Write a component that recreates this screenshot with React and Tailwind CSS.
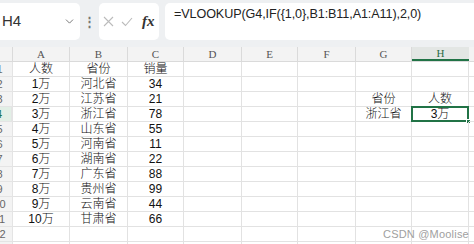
import React from 'react';
import { ChevronDown } from 'lucide-react';

// column widths in px, A..I
const cols = [
  { key: 'A', w: 'w-[57px]' },
  { key: 'B', w: 'w-[58px]' },
  { key: 'C', w: 'w-[56px]' },
  { key: 'D', w: 'w-[58px]' },
  { key: 'E', w: 'w-[56px]' },
  { key: 'F', w: 'w-[58px]' },
  { key: 'G', w: 'w-[56px]' },
  { key: 'H', w: 'w-[57px]' },
  { key: 'I', w: 'w-[60px]' },
];

const data = {
  1: { A: '人数', B: '省份', C: '销量' },
  2: { A: '1万', B: '河北省', C: '34' },
  3: { A: '2万', B: '江苏省', C: '21', G: '省份', H: '人数' },
  4: { A: '3万', B: '浙江省', C: '78', G: '浙江省', H: '3万' },
  5: { A: '4万', B: '山东省', C: '55' },
  6: { A: '5万', B: '河南省', C: '11' },
  7: { A: '6万', B: '湖南省', C: '22' },
  8: { A: '7万', B: '广东省', C: '88' },
  9: { A: '8万', B: '贵州省', C: '99' },
  10: { A: '9万', B: '云南省', C: '44' },
  11: { A: '10万', B: '甘肃省', C: '66' },
  12: {},
  13: {},
};

const Toolbar = () => (
  <div className="h-[47px] bg-[#eef0f2] flex items-start pt-[3px]">
    <div className="-ml-[6px] w-[86px] h-[37px] bg-white rounded-[5px] flex items-center justify-between pl-[8px] pr-[4px] text-[15px] text-[#333]">
      <span>H4</span>
      <ChevronDown size={13} strokeWidth={1.6} className="text-[#666]" />
    </div>
    <div className="w-[19px] h-[37px] flex items-center justify-center text-[#777] text-[13px] font-bold">⋮</div>
    <div className="w-[60px] h-[37px] bg-white rounded-[5px] flex items-center pl-[4px] gap-[7px]">
      <svg width="11" height="11" viewBox="0 0 11 11" className="text-[#bbb]">
        <path d="M1 1L10 10M10 1L1 10" stroke="currentColor" strokeWidth="1.1" fill="none" />
      </svg>
      <svg width="12" height="10" viewBox="0 0 12 10" className="text-[#bbb]">
        <path d="M1 5L4.5 8.5L11 1" stroke="currentColor" strokeWidth="1.1" fill="none" />
      </svg>
      <span className="font-['Liberation_Serif',serif] italic font-bold text-[15px] text-[#333] ml-[2px]">fx</span>
    </div>
    <div className="ml-[6px] flex-1 -mr-[10px] h-[37px] bg-white rounded-[5px] pl-[9px] pt-[2px] text-[12.6px] text-[#222] leading-[18px] tracking-[-0.1px]">
      =VLOOKUP(G4,IF({'{'}1,0{'}'},B1:B11,A1:A11),2,0)
    </div>
  </div>
);

const HeaderRow = () => (
  <div className="flex h-[15px] bg-[#f3f3f3] border-b border-[#dadada]">
    <div className="w-[26px] shrink-0 -ml-[13px] border-r border-[#dadada]" />
    {cols.map((c) => (
      <div
        key={c.key}
        className={`${c.w} shrink-0 flex items-center justify-center text-[11px] font-['Liberation_Serif',serif] ${
          c.key === 'H'
            ? 'bg-[#e3e6e4] text-[#2b6b45] border-b-2 border-[#217346]'
            : 'text-[#555] border-r border-[#dadada]'
        }`}
      >
        {c.key}
      </div>
    ))}
  </div>
);

const Row = ({ n }) => {
  const row = data[n] || {};
  const active = n === 4;
  return (
    <div className="flex h-[15px]">
      <div
        className={`w-[26px] shrink-0 -ml-[13px] flex items-center justify-center text-[11px] ${
          active
            ? 'bg-[#e2efe6] text-[#217346] border-r-2 border-[#217346]'
            : 'bg-[#f3f3f3] text-[#666] border-r border-[#dadada]'
        } border-b border-[#e4e4e4]`}
      >
        {n}
      </div>
      {cols.map((c) => (
        <div
          key={c.key}
          className={`${c.w} shrink-0 relative flex items-center justify-center border-r border-b border-[#e2e2e2] text-[12px] font-light text-[#111]`}
        >
          {row[c.key]}
          {active && c.key === 'H' && (
            <>
              <div className="absolute -left-px -top-px -right-px -bottom-px border-2 border-[#217346]" />
              <div className="absolute -right-[3px] -bottom-[3px] w-[5px] h-[5px] bg-[#217346] border border-white" />
            </>
          )}
        </div>
      ))}
    </div>
  );
};

export default function App() {
  return (
    <div className="w-[474px] h-[244px] overflow-hidden bg-white relative font-['Liberation_Sans','Noto_Sans_CJK_SC',sans-serif]">
      <Toolbar />
      <HeaderRow />
      {Array.from({ length: 13 }, (_, i) => (
        <Row key={i + 1} n={i + 1} />
      ))}
      <div className="absolute left-[383px] top-[226px] text-[11px] text-[#a0a0a0] tracking-[0.2px]">
        CSDN @Moolise
      </div>
    </div>
  );
}
